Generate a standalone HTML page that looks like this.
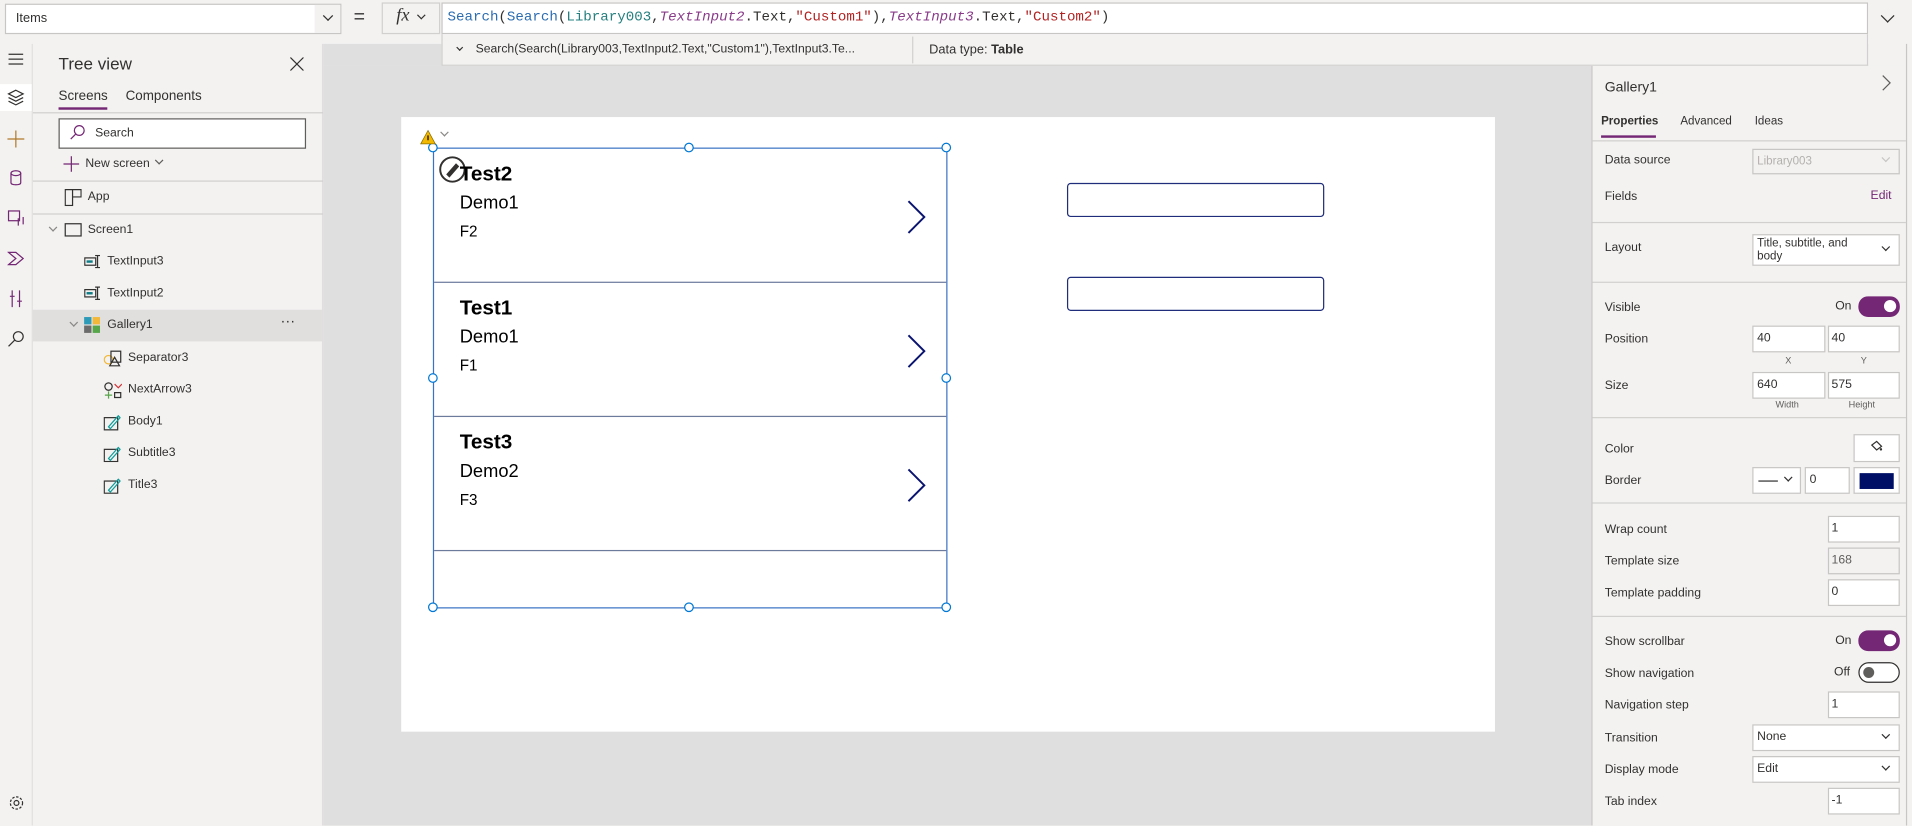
<!DOCTYPE html>
<html><head><meta charset="utf-8"><style>
*{box-sizing:border-box;margin:0;padding:0}
html,body{width:1912px;height:826px;overflow:hidden;background:#f3f2f1}
#s{position:absolute;left:0;top:0;width:1568px;height:677px;transform:scale(1.2194);transform-origin:0 0;font-family:"Liberation Sans",sans-serif;color:#323130;font-size:10.5px;background:#f3f2f1}
.a{position:absolute}
.t{position:absolute;white-space:nowrap}
.box{position:absolute;background:#fff;border:1px solid #c8c6c4}
.sep{position:absolute;height:1px;background:#d2d0ce}
.chev{position:absolute;width:6px;height:6px;border-right:1px solid #323130;border-bottom:1px solid #323130;transform:rotate(45deg)}
.lbl{position:absolute;left:1316px;font-size:10px;color:#323130}
.h{position:absolute;width:8px;height:8px;border-radius:50%;border:1px solid #0078d4;background:#fff}
.tog{position:absolute;width:34px;height:16px;border-radius:8px;background:#742774}
.tog:after{content:"";position:absolute;right:3px;top:3px;width:10px;height:10px;border-radius:50%;background:#fff}
.ti{font-size:10px;color:#323130}
</style></head><body><div id="s">
<!-- top bar -->
<div class="box" style="left:4px;top:3px;width:276px;height:25px;border-color:#c8c6c4"></div>
<div class="t" style="left:13px;top:9px;font-size:10.5px">Items</div>
<div class="a" style="left:258px;top:4px;width:21px;height:23px;background:#f3f2f1"></div>
<div class="chev" style="left:266px;top:10px"></div>
<div class="t" style="left:290px;top:6px;font-size:16px">=</div>
<div class="a" style="left:313px;top:2px;width:48px;height:26px;border:1px solid #d2d0ce;background:#f3f2f1"></div>
<div class="t" style="left:325px;top:5px;font-family:'Liberation Serif',serif;font-style:italic;font-size:15px">fx</div>
<div class="chev" style="left:343px;top:10px;width:5px;height:5px"></div>
<div class="a" style="left:362px;top:2px;width:1170px;height:26px;background:#fff;border:1px solid #c8c6c4"></div>
<div class="t" style="left:367px;top:8px;font-family:'Liberation Mono',monospace;font-size:11.6px;color:#323130"><span style="color:#2b6cb0">Search</span>(<span style="color:#2b6cb0">Search</span>(<span style="color:#267f7f">Library003</span>,<i style="color:#8a3c8a">TextInput2</i>.Text,<span style="color:#b22222">"Custom1"</span>),<i style="color:#8a3c8a">TextInput3</i>.Text,<span style="color:#b22222">"Custom2"</span>)</div>
<div class="chev" style="left:1545px;top:9px;width:8px;height:8px"></div>
<div class="a" style="left:362px;top:28px;width:1170px;height:26px;background:#f3f2f1;border:1px solid #d2d0ce;border-top:none"></div>
<div class="chev" style="left:375px;top:37px;width:4px;height:4px"></div>
<div class="t" style="left:390px;top:35px;font-size:10px">Search(Search(Library003,TextInput2.Text,"Custom1"),TextInput3.Te...</div>
<div class="a" style="left:748px;top:30px;width:1px;height:22px;background:#d2d0ce"></div>
<div class="t" style="left:762px;top:35px;font-size:10.5px">Data type: <b>Table</b></div>
<!-- left rail -->
<div class="a" style="left:0;top:36px;width:27px;height:641px;background:#f3f2f1;border-right:1px solid #e1dfdd"></div>
<div class="a" style="left:0;top:69px;width:26px;height:22px;background:#fff"></div>
<div class="a" style="left:7px;top:44px;width:12px;height:1px;background:#323130;box-shadow:0 4px 0 #323130,0 8px 0 #323130"></div>
<svg class="a" style="left:6px;top:73px" width="14" height="14" viewBox="0 0 14 14" fill="none" stroke="#323130"><path d="M7 1l6 3-6 3-6-3z M1 7l6 3 6-3 M1 10l6 3 6-3"/></svg>
<svg class="a" style="left:6px;top:107px" width="14" height="14" fill="none" stroke="#b07a2a"><path d="M7 0v14M0 7h14"/></svg>
<svg class="a" style="left:8px;top:139px" width="10" height="14" fill="none" stroke="#742774"><ellipse cx="5" cy="3" rx="4" ry="2"/><path d="M1 3v8c0 2 8 2 8 0V3"/></svg>
<svg class="a" style="left:6px;top:172px" width="14" height="14" fill="none" stroke="#742774"><rect x="1" y="1" width="9" height="8"/><path d="M9 7v6M13 6v6"/></svg>
<svg class="a" style="left:6px;top:205px" width="14" height="14" fill="none" stroke="#742774"><path d="M1 2h6l6 5-6 5H1l6-5z"/></svg>
<svg class="a" style="left:8px;top:238px" width="10" height="14" fill="none" stroke="#742774"><path d="M2 0v14M8 0v14M0 5h4M6 9h4"/></svg>
<svg class="a" style="left:6px;top:271px" width="14" height="14" fill="none" stroke="#323130"><circle cx="9" cy="5" r="4"/><path d="M6 8l-5 5"/></svg>
<svg class="a" style="left:7px;top:652px" width="13" height="13" fill="none" stroke="#323130"><circle cx="6.5" cy="6.5" r="2"/><circle cx="6.5" cy="6.5" r="5" stroke-dasharray="2 1.3"/></svg>
<!-- tree panel -->
<div class="a" style="left:27px;top:36px;width:238px;height:641px;background:#f3f2f1;border-right:1px solid #e1dfdd"></div>
<div class="t" style="left:48px;top:44px;font-size:14px">Tree view</div>
<svg class="a" style="left:238px;top:47px" width="11" height="11" stroke="#323130"><path d="M0 0l11 11M11 0L0 11"/></svg>
<div class="t" style="left:48px;top:73px;font-size:11px">Screens</div>
<div class="a" style="left:48px;top:88px;width:40px;height:2px;background:#742774"></div>
<div class="t" style="left:103px;top:73px;font-size:11px">Components</div>
<div class="sep" style="left:27px;top:92px;width:238px"></div>
<div class="a" style="left:48px;top:97px;width:203px;height:25px;background:#fff;border:1px solid #605e5c"></div>
<svg class="a" style="left:57px;top:102px" width="13" height="13" fill="none" stroke="#742774"><circle cx="8" cy="5" r="4"/><path d="M5 8l-4 4"/></svg>
<div class="t ti" style="left:78px;top:104px">Search</div>
<svg class="a" style="left:52px;top:128px" width="13" height="13" stroke="#742774"><path d="M6.5 0v13M0 6.5h13"/></svg>
<div class="t ti" style="left:70px;top:129px">New screen</div>
<div class="chev" style="left:128px;top:129px;width:5px;height:5px;border-color:#605e5c"></div>
<div class="sep" style="left:27px;top:148px;width:238px"></div>
<svg class="a" style="left:53px;top:155px" width="14" height="14" fill="none" stroke="#323130"><path d="M0.5 0.5h13v6h-7v7h-6zM6.5 0.5v13"/></svg>
<div class="t ti" style="left:72px;top:156px">App</div>
<div class="sep" style="left:27px;top:175px;width:238px"></div>
<div class="chev" style="left:41px;top:184px;width:5px;height:5px;border-color:#8a8886"></div>
<div class="a" style="left:53px;top:183px;width:14px;height:11px;border:1px solid #323130"></div>
<div class="t ti" style="left:72px;top:183px">Screen1</div>
<svg class="a" style="left:69px;top:209px" width="15" height="11" fill="none" stroke="#323130"><rect x="0.5" y="2.5" width="9" height="6"/><path d="M11 0v11M9 0.5h4M9 10.5h4"/><rect x="2" y="4.5" width="5" height="2" fill="#0f7c86" stroke="none"/></svg>
<div class="t ti" style="left:88px;top:209px">TextInput3</div>
<svg class="a" style="left:69px;top:235px" width="15" height="11" fill="none" stroke="#323130"><rect x="0.5" y="2.5" width="9" height="6"/><path d="M11 0v11M9 0.5h4M9 10.5h4"/><rect x="2" y="4.5" width="5" height="2" fill="#0f7c86" stroke="none"/></svg>
<div class="t ti" style="left:88px;top:235px">TextInput2</div>
<div class="a" style="left:27px;top:254px;width:237px;height:26px;background:#e1dfdd"></div>
<div class="chev" style="left:58px;top:262px;width:5px;height:5px;border-color:#8a8886"></div>
<div class="a" style="left:69px;top:260px;width:6px;height:6px;background:#2d9ab8"></div>
<div class="a" style="left:76px;top:260px;width:6px;height:6px;background:#f2b83a"></div>
<div class="a" style="left:69px;top:267px;width:6px;height:6px;background:#6b6b6b"></div>
<div class="a" style="left:76px;top:267px;width:6px;height:6px;background:#57a64a"></div>
<div class="t ti" style="left:88px;top:261px">Gallery1</div>
<div class="t" style="left:230px;top:256px;font-size:12px">···</div>
<svg class="a" style="left:85px;top:287px" width="15" height="14" fill="none"><circle cx="4" cy="8" r="3.5" stroke="#f2b83a"/><rect x="6" y="1" width="8" height="9" stroke="#323130"/><path d="M5 13l4-7 4 7z" stroke="#323130"/></svg>
<div class="t ti" style="left:105px;top:288px">Separator3</div>
<svg class="a" style="left:85px;top:313px" width="15" height="14" fill="none" stroke-width="1"><circle cx="4" cy="4" r="3" stroke="#323130"/><path d="M9 2l3 3 3-3" stroke="#d13438"/><path d="M4 8v6M1 11h6" stroke="#57a64a"/><path d="M9 9h5v4H9z" stroke="#323130"/></svg>
<div class="t ti" style="left:105px;top:314px">NextArrow3</div>
<svg class="a" style="left:85px;top:340px" width="14" height="13" fill="none"><rect x="0.5" y="2.5" width="11" height="10" stroke="#323130"/><path d="M4 10l8-9 1.5 1.5-8 9z" stroke="#0f9d9a"/></svg>
<div class="t ti" style="left:105px;top:340px">Body1</div>
<svg class="a" style="left:85px;top:366px" width="14" height="13" fill="none"><rect x="0.5" y="2.5" width="11" height="10" stroke="#323130"/><path d="M4 10l8-9 1.5 1.5-8 9z" stroke="#0f9d9a"/></svg>
<div class="t ti" style="left:105px;top:366px">Subtitle3</div>
<svg class="a" style="left:85px;top:392px" width="14" height="13" fill="none"><rect x="0.5" y="2.5" width="11" height="10" stroke="#323130"/><path d="M4 10l8-9 1.5 1.5-8 9z" stroke="#0f9d9a"/></svg>
<div class="t ti" style="left:105px;top:392px">Title3</div>
<!-- canvas -->
<div class="a" style="left:265px;top:54px;width:1040px;height:623px;background:#dfdfdf"></div>
<div class="a" style="left:265px;top:36px;width:97px;height:18px;background:#dfdfdf"></div>
<div class="a" style="left:329px;top:96px;width:897px;height:504px;background:#fff"></div>
<div class="a" style="left:355px;top:121px;width:422px;height:378px;border:1px solid #3b73c4"></div>
<div class="a" style="left:356px;top:231px;width:420px;height:1px;background:#6c7a9c"></div>
<div class="a" style="left:356px;top:341px;width:420px;height:1px;background:#6c7a9c"></div>
<div class="a" style="left:356px;top:451px;width:420px;height:1px;background:#6c7a9c"></div>
<div class="h" style="left:351px;top:117px"></div><div class="h" style="left:561px;top:117px"></div><div class="h" style="left:772px;top:117px"></div>
<div class="h" style="left:351px;top:306px"></div><div class="h" style="left:772px;top:306px"></div>
<div class="h" style="left:351px;top:494px"></div><div class="h" style="left:561px;top:494px"></div><div class="h" style="left:772px;top:494px"></div>
<svg class="a" style="left:344px;top:106px" width="14" height="13"><path d="M7 1L13 12H1z" fill="#f2b900" stroke="#8a6d00" stroke-width=".6"/><path d="M7 5v4" stroke="#000"/></svg>
<div class="chev" style="left:362px;top:106px;width:5px;height:5px;border-color:#8a8886"></div>
<svg class="a" style="left:359px;top:127px" width="24" height="24" fill="none" stroke="#323130" stroke-width="1.6"><circle cx="12" cy="12" r="10"/><path d="M8 16l7-8 1.5 1.5-7 8z" fill="#323130"/></svg>
<div class="t" style="left:377px;top:133px;font-size:17px;font-weight:bold;color:#000">Test2</div>
<div class="t" style="left:377px;top:158px;font-size:15px;color:#000">Demo1</div>
<div class="t" style="left:377px;top:183px;font-size:12.5px;color:#000">F2</div>
<div class="t" style="left:377px;top:243px;font-size:17px;font-weight:bold;color:#000">Test1</div>
<div class="t" style="left:377px;top:268px;font-size:15px;color:#000">Demo1</div>
<div class="t" style="left:377px;top:293px;font-size:12.5px;color:#000">F1</div>
<div class="t" style="left:377px;top:353px;font-size:17px;font-weight:bold;color:#000">Test3</div>
<div class="t" style="left:377px;top:378px;font-size:15px;color:#000">Demo2</div>
<div class="t" style="left:377px;top:403px;font-size:12.5px;color:#000">F3</div>
<svg class="a" style="left:744px;top:164px" width="16" height="28" fill="none" stroke="#0a1470" stroke-width="1.6"><path d="M1 1l13 13L1 27"/></svg>
<svg class="a" style="left:744px;top:274px" width="16" height="28" fill="none" stroke="#0a1470" stroke-width="1.6"><path d="M1 1l13 13L1 27"/></svg>
<svg class="a" style="left:744px;top:384px" width="16" height="28" fill="none" stroke="#0a1470" stroke-width="1.6"><path d="M1 1l13 13L1 27"/></svg>
<div class="a" style="left:875px;top:150px;width:211px;height:28px;border:1.3px solid #1f2d7a;border-radius:3px"></div>
<div class="a" style="left:875px;top:227px;width:211px;height:28px;border:1.3px solid #1f2d7a;border-radius:3px"></div>
<!-- right panel -->
<div class="a" style="left:1305px;top:54px;width:258px;height:623px;background:#f3f2f1;border-left:1px solid #c8c6c4"></div>
<div class="a" style="left:1532px;top:0;width:36px;height:36px;background:#f3f2f1"></div>
<div class="chev" style="left:1544px;top:9px;width:8px;height:8px"></div>
<div class="a" style="left:1563px;top:36px;width:5px;height:641px;background:#f3f2f1;border-left:1px solid #c8c6c4"></div>
<svg class="a" style="left:1543px;top:61px" width="9" height="14" fill="none" stroke="#605e5c"><path d="M1 1l6 6-6 6"/></svg>
<div class="t" style="left:1316px;top:66px;font-size:11.5px">Gallery1</div>
<div class="t" style="left:1313px;top:94px;font-size:9.5px;font-weight:bold">Properties</div>
<div class="a" style="left:1313px;top:111px;width:45px;height:2px;background:#742774"></div>
<div class="t" style="left:1378px;top:94px;font-size:9.5px">Advanced</div>
<div class="t" style="left:1439px;top:94px;font-size:9.5px">Ideas</div>
<div class="sep" style="left:1306px;top:115px;width:257px"></div>
<div class="lbl" style="top:126px">Data source</div>
<div class="a" style="left:1437px;top:122px;width:121px;height:21px;border:1px solid #c8c6c4;background:#f3f2f1"></div>
<div class="t" style="left:1441px;top:127px;font-size:9.5px;color:#b3b0ad">Library003</div>
<div class="chev" style="left:1544px;top:127px;width:5px;height:5px;border-color:#c8c6c4"></div>
<div class="lbl" style="top:156px">Fields</div>
<div class="t" style="left:1534px;top:155px;font-size:10px;color:#742774">Edit</div>
<div class="sep" style="left:1306px;top:182px;width:257px"></div>
<div class="lbl" style="top:198px">Layout</div>
<div class="a" style="left:1437px;top:192px;width:121px;height:26px;background:#fff;border:1px solid #c8c6c4"></div>
<div class="t" style="left:1441px;top:194px;font-size:9.5px;line-height:11px">Title, subtitle, and<br>body</div>
<div class="chev" style="left:1544px;top:200px;width:5px;height:5px"></div>
<div class="sep" style="left:1306px;top:231px;width:257px"></div>
<div class="lbl" style="top:247px">Visible</div>
<div class="t" style="left:1505px;top:246px;font-size:10px">On</div>
<div class="tog" style="left:1524px;top:243px;height:17px"></div>
<div class="lbl" style="top:273px">Position</div>
<div class="box" style="left:1437px;top:267px;width:60px;height:22px"></div><div class="t" style="left:1441px;top:272px;font-size:10px">40</div>
<div class="box" style="left:1499px;top:267px;width:59px;height:22px"></div><div class="t" style="left:1502px;top:272px;font-size:10px">40</div>
<div class="t" style="left:1464px;top:291px;font-size:7.5px;color:#605e5c">X</div>
<div class="t" style="left:1526px;top:291px;font-size:7.5px;color:#605e5c">Y</div>
<div class="lbl" style="top:311px">Size</div>
<div class="box" style="left:1437px;top:305px;width:60px;height:22px"></div><div class="t" style="left:1441px;top:310px;font-size:10px">640</div>
<div class="box" style="left:1499px;top:305px;width:59px;height:22px"></div><div class="t" style="left:1502px;top:310px;font-size:10px">575</div>
<div class="t" style="left:1456px;top:327px;font-size:7.5px;color:#605e5c">Width</div>
<div class="t" style="left:1516px;top:327px;font-size:7.5px;color:#605e5c">Height</div>
<div class="sep" style="left:1306px;top:342px;width:257px"></div>
<div class="lbl" style="top:363px">Color</div>
<div class="box" style="left:1520px;top:356px;width:38px;height:23px"></div>
<svg class="a" style="left:1534px;top:361px" width="10" height="9"><path d="M1 4l4-3 4 4-4 3z" fill="none" stroke="#323130"/><circle cx="8.5" cy="7.5" r="1" fill="#323130"/></svg>
<div class="lbl" style="top:389px">Border</div>
<div class="box" style="left:1437px;top:383px;width:40px;height:22px"></div>
<div class="a" style="left:1442px;top:394px;width:16px;height:1px;background:#323130"></div>
<div class="chev" style="left:1464px;top:389px;width:5px;height:5px"></div>
<div class="box" style="left:1480px;top:383px;width:37px;height:22px"></div><div class="t" style="left:1484px;top:388px;font-size:10px">0</div>
<div class="box" style="left:1520px;top:383px;width:38px;height:22px"></div>
<div class="a" style="left:1525px;top:388px;width:28px;height:13px;background:#000f66"></div>
<div class="sep" style="left:1306px;top:412px;width:257px"></div>
<div class="lbl" style="top:429px">Wrap count</div>
<div class="box" style="left:1499px;top:423px;width:59px;height:22px"></div><div class="t" style="left:1502px;top:428px;font-size:10px">1</div>
<div class="lbl" style="top:455px">Template size</div>
<div class="box" style="left:1499px;top:449px;width:59px;height:22px;background:#f3f2f1"></div><div class="t" style="left:1502px;top:454px;font-size:10px;color:#605e5c">168</div>
<div class="lbl" style="top:481px">Template padding</div>
<div class="box" style="left:1499px;top:475px;width:59px;height:22px"></div><div class="t" style="left:1502px;top:480px;font-size:10px">0</div>
<div class="sep" style="left:1306px;top:505px;width:257px"></div>
<div class="lbl" style="top:521px">Show scrollbar</div>
<div class="t" style="left:1505px;top:520px;font-size:10px">On</div>
<div class="tog" style="left:1524px;top:517px;height:17px"></div>
<div class="lbl" style="top:547px">Show navigation</div>
<div class="t" style="left:1504px;top:546px;font-size:10px">Off</div>
<div class="a" style="left:1524px;top:543px;width:34px;height:17px;border-radius:9px;border:1px solid #323130;background:#fff"></div>
<div class="a" style="left:1528px;top:547px;width:9px;height:9px;border-radius:50%;background:#605e5c"></div>
<div class="lbl" style="top:573px">Navigation step</div>
<div class="box" style="left:1499px;top:567px;width:59px;height:22px"></div><div class="t" style="left:1502px;top:572px;font-size:10px">1</div>
<div class="lbl" style="top:600px">Transition</div>
<div class="box" style="left:1437px;top:594px;width:121px;height:22px"></div><div class="t" style="left:1441px;top:599px;font-size:10px">None</div>
<div class="chev" style="left:1544px;top:600px;width:5px;height:5px"></div>
<div class="lbl" style="top:626px">Display mode</div>
<div class="box" style="left:1437px;top:620px;width:121px;height:22px"></div><div class="t" style="left:1441px;top:625px;font-size:10px">Edit</div>
<div class="chev" style="left:1544px;top:626px;width:5px;height:5px"></div>
<div class="lbl" style="top:652px">Tab index</div>
<div class="box" style="left:1499px;top:646px;width:59px;height:22px"></div><div class="t" style="left:1502px;top:651px;font-size:10px">-1</div>
</div></body></html>
